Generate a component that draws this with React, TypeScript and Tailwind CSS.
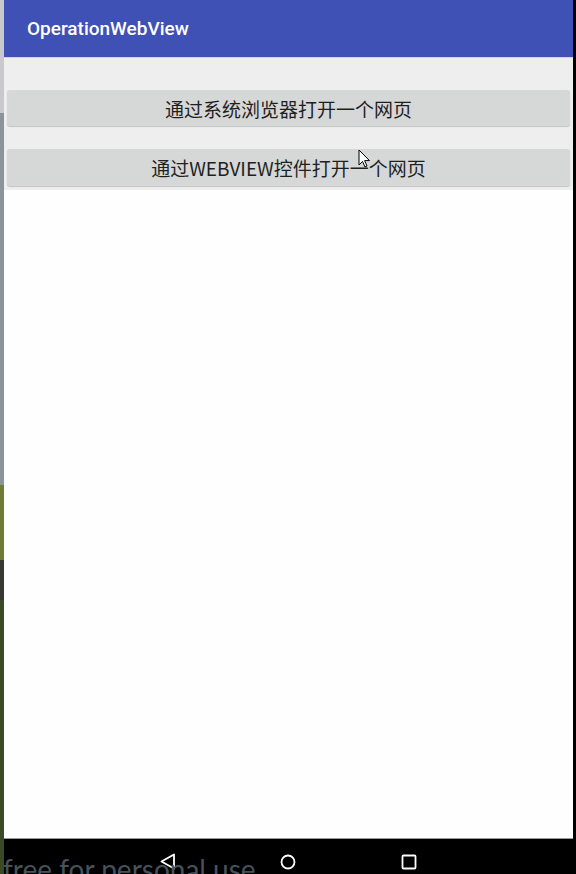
import React from "react";

export default function App() {
  return (
    <div className="relative w-[576px] h-[874px] overflow-hidden bg-black flex">
      {/* left background strip */}
      <div className="w-[4px] h-full flex flex-col">
        <div className="h-[113px] bg-[#c9c9cd]" />
        <div className="h-[372px] bg-[#8b939b]" />
        <div className="h-[75px] bg-[#6f7c36]" />
        <div className="h-[40px] bg-[#363932]" />
        <div className="flex-1 bg-[#3a4a26]" />
      </div>

      {/* phone screen */}
      <div className="flex-1 h-full flex flex-col bg-white">
        <div className="h-[57px] bg-[#3F51B5] flex items-center pl-[23px] shrink-0">
          <span className="text-white text-[19px] font-medium font-['Roboto',sans-serif] leading-none">
            OperationWebView
          </span>
        </div>
        <div className="h-[133px] bg-[#EEEEEE] border-t border-[#d4d4d4] flex flex-col px-[3px] pt-[32px] gap-[23px] shrink-0">
          <button className="h-[36px] w-full rounded-[3px] bg-[#D6D7D7] shadow-[0_1px_1px_rgba(0,0,0,0.18)] text-[#1f1f1f] text-[19px] leading-none font-['Noto_Sans_CJK_SC',sans-serif] flex items-center justify-center">
            通过系统浏览器打开一个网页
          </button>
          <button className="h-[37px] w-full rounded-[3px] bg-[#D6D7D7] shadow-[0_1px_1px_rgba(0,0,0,0.18)] text-[#1f1f1f] text-[19px] leading-none font-['Noto_Sans_CJK_SC',sans-serif] flex items-center justify-center">
            通过WEBVIEW控件打开一个网页
          </button>
        </div>
        <div className="flex-1 bg-[#FEFEFE]" />
        <div className="h-[36px] bg-black border-t border-[#9a9a9a] shrink-0 relative">
          <div className="absolute left-[155px] top-[14px]">
            <svg width="18" height="18" viewBox="0 0 18 18">
              <path d="M15 1.5 L2.5 8.5 L15 15.5 Z" fill="none" stroke="white" strokeWidth="1.8" strokeLinejoin="round" />
            </svg>
          </div>
          <div className="absolute left-[276px] top-[15px]">
            <svg width="16" height="16" viewBox="0 0 16 16">
              <circle cx="8" cy="8" r="6.5" fill="none" stroke="white" strokeWidth="1.8" />
            </svg>
          </div>
          <div className="absolute left-[397px] top-[15px]">
            <svg width="16" height="16" viewBox="0 0 16 16">
              <rect x="1.5" y="1.5" width="13" height="13" rx="1" fill="none" stroke="white" strokeWidth="1.8" />
            </svg>
          </div>
        </div>
      </div>

      {/* right border */}
      <div className="w-[3px] h-full bg-black" />

      {/* overlay watermark text */}
      <div className="absolute left-[3px] top-[855px] text-[28px] leading-none text-[#46525b] font-['Lato',sans-serif] whitespace-nowrap pointer-events-none">
        free for personal use
      </div>

      {/* mouse cursor */}
      <div className="absolute left-[358px] top-[149px] pointer-events-none">
        <svg width="14" height="20" viewBox="0 0 14 20">
          <path d="M1 1 L1 16 L4.5 12.5 L7 18 L9 17 L6.6 11.6 L11.5 11.6 Z" fill="white" stroke="black" strokeWidth="1" strokeLinejoin="round" />
        </svg>
      </div>
    </div>
  );
}
